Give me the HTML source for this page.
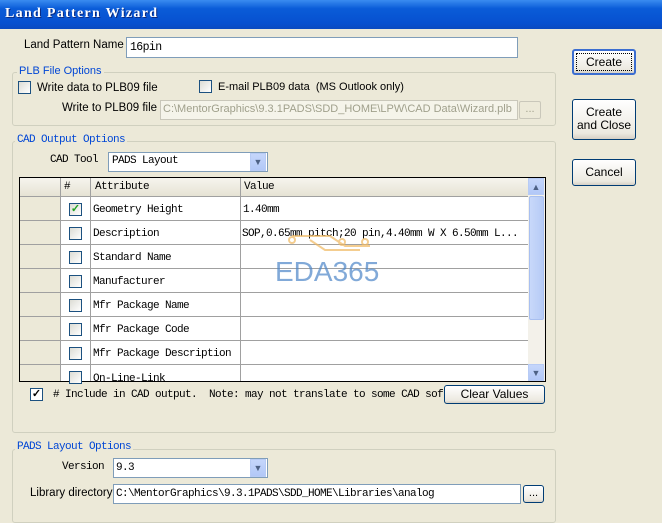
<!DOCTYPE html>
<html><head><meta charset="utf-8"><style>
*{margin:0;padding:0;box-sizing:border-box}
body{width:662px;height:510px;background:#ece9d8;position:relative;overflow:hidden;font-family:"Liberation Sans",sans-serif;font-size:11px;color:#000}
.a{position:absolute;white-space:nowrap}
.m{font-family:"Liberation Mono","Noto Sans CJK SC",monospace;font-size:11px;letter-spacing:-0.6px}
.title{left:0;top:0;width:662px;height:29px;background:linear-gradient(#3a8cf0,#0a5cd8 30%,#0750d0 80%,#0a4ac0);}
.tt{left:5px;top:6px;color:#fff;font-family:"Liberation Serif",serif;font-weight:bold;font-size:14px;letter-spacing:1.3px;text-shadow:1px 1px 0 #0a2a80}
.inp{position:absolute;background:#fff;border:1px solid #7f9db9}
.grp{position:absolute;border:1px solid #d0d0bf;border-radius:3px}
.gt{position:absolute;background:#ece9d8;color:#0046d5;padding:0 2px}
.cb{position:absolute;width:13px;height:13px;border:1px solid #1c5180;background:linear-gradient(135deg,#dcdcd4,#fff)}
.btn{position:absolute;border:1px solid #003c74;border-radius:3px;background:linear-gradient(#fff,#ece9e0 85%,#d6d0c5);text-align:center;font-size:12px}
.combo-b{position:absolute;width:16px;background:linear-gradient(#c5d6fb,#b2c8f7);border:1px solid #b7cbf5;color:#4d6185;font-size:9px;text-align:center;line-height:16px}
.row{position:absolute;left:20px;width:508px;height:24px;border-bottom:1px solid #a0a0a0}
</style></head><body>
<div class="a title"></div>
<div class="a tt">Land Pattern Wizard</div>

<div class="a" style="left:24px;top:39px;font-size:11.5px">Land Pattern Name</div>
<div class="inp" style="left:126px;top:37px;width:392px;height:21px"></div>
<div class="a m" style="left:130px;top:41px;font-size:11.5px">16pin</div>

<div class="grp" style="left:12px;top:72px;width:544px;height:54px"></div>
<div class="gt" style="left:17px;top:65px;font-size:11px">PLB File Options</div>
<div class="cb" style="left:18px;top:81px"></div>
<div class="a" style="left:37px;top:82px;font-size:11.5px">Write data to PLB09 file</div>
<div class="cb" style="left:199px;top:80px"></div>
<div class="a" style="left:218px;top:81px;font-size:11px">E-mail PLB09 data&nbsp; (MS Outlook only)</div>
<div class="a" style="left:62px;top:102px;font-size:11.5px">Write to PLB09 file</div>
<div class="inp" style="left:160px;top:100px;width:358px;height:20px;background:#f5f4ea;border-color:#c9c7ba"></div>
<div class="a" style="left:163px;top:103px;color:#a0a08c;font-size:11px">C:\MentorGraphics\9.3.1PADS\SDD_HOME\LPW\CAD Data\Wizard.plb</div>
<div class="a" style="left:519px;top:101px;width:22px;height:18px;border:1px solid #c9c7ba;border-radius:2px;color:#a0a08c;text-align:center;line-height:14px">...</div>

<div class="grp" style="left:12px;top:141px;width:544px;height:292px"></div>
<div class="gt m" style="left:15px;top:134px">CAD Output Options</div>
<div class="a m" style="left:50px;top:154px">CAD Tool</div>
<div class="inp" style="left:108px;top:152px;width:160px;height:20px"></div>
<div class="a m" style="left:112px;top:155px">PADS Layout</div>
<div class="combo-b" style="left:250px;top:153px;height:18px">&#9660;</div>

<div class="a" style="left:19px;top:177px;width:527px;height:205px;border:1px solid #000;background:#fff;overflow:hidden"></div>
<div class="a" style="left:20px;top:178px;width:40px;height:203px;background:#ece9d8"></div>
<div class="a" style="left:20px;top:178px;width:508px;height:19px;background:linear-gradient(#f6f5ee,#e6e3d4);border-bottom:1px solid #a0a0a0"></div>
<div class="a m" style="left:64px;top:181px">#</div>
<div class="a m" style="left:95px;top:181px">Attribute</div>
<div class="a m" style="left:244px;top:181px">Value</div>
<div class="a" style="left:60px;top:178px;width:1px;height:203px;background:#a0a0a0"></div>
<div class="a" style="left:90px;top:178px;width:1px;height:203px;background:#a0a0a0"></div>
<div class="a" style="left:240px;top:178px;width:1px;height:203px;background:#a0a0a0"></div>

<div class="row" style="top:197px"></div><div class="row" style="top:221px"></div><div class="row" style="top:245px"></div><div class="row" style="top:269px"></div><div class="row" style="top:293px"></div><div class="row" style="top:317px"></div><div class="row" style="top:341px"></div>
<div class="a" style="left:20px;top:197px;width:40px;height:184px;background:repeating-linear-gradient(#ece9d8 0,#ece9d8 23px,#a0a0a0 23px,#a0a0a0 24px)"></div>

<div class="cb" style="left:69px;top:203px;color:#21a121;font-size:11px;line-height:11px;text-align:center;font-weight:bold">&#10003;</div>
<div class="cb" style="left:69px;top:227px"></div><div class="cb" style="left:69px;top:251px"></div><div class="cb" style="left:69px;top:275px"></div><div class="cb" style="left:69px;top:299px"></div><div class="cb" style="left:69px;top:323px"></div><div class="cb" style="left:69px;top:347px"></div><div class="cb" style="left:69px;top:371px"></div>
<div class="a m" style="left:93px;top:204px">Geometry Height</div>
<div class="a m" style="left:93px;top:228px">Description</div>
<div class="a m" style="left:93px;top:252px">Standard Name</div>
<div class="a m" style="left:93px;top:276px">Manufacturer</div>
<div class="a m" style="left:93px;top:300px">Mfr Package Name</div>
<div class="a m" style="left:93px;top:324px">Mfr Package Code</div>
<div class="a m" style="left:93px;top:348px">Mfr Package Description</div>
<div class="a" style="left:93px;top:372px;height:9px;overflow:hidden"><span class="m">On-Line-Link</span></div>
<div class="a m" style="left:243px;top:204px">1.40mm</div>
<div class="a m" style="left:242px;top:228px">SOP,0.65mm pitch;20 pin,4.40mm W X 6.50mm L...</div>

<div class="a" style="left:528px;top:178px;width:17px;height:203px;background:#f3f1ea"></div>
<div class="combo-b" style="left:528px;top:178px;height:17px">&#9650;</div>
<div class="a" style="left:529px;top:196px;width:15px;height:124px;background:linear-gradient(90deg,#c8d8fa,#b6cbf6);border:1px solid #a8bff0;border-radius:2px"></div>
<div class="combo-b" style="left:528px;top:364px;height:17px">&#9660;</div>

<svg class="a" style="left:270px;top:228px" width="120" height="60"><g stroke="#f0b860" stroke-width="2" fill="none" opacity=".7"><path d="M22 8 H60 L75 18 H100"/><path d="M40 12 L55 22 H90"/><circle cx="22" cy="12" r="3"/><circle cx="72" cy="14" r="3"/><circle cx="95" cy="14" r="3"/></g><text x="5" y="53" font-family="Liberation Sans,sans-serif" font-size="28" fill="#4c86c8" opacity=".7">EDA365</text></svg>

<div class="cb" style="left:30px;top:388px;background:#fff;font-size:11px;line-height:11px;text-align:center;font-weight:bold">&#10003;</div>
<div class="a m" style="left:53px;top:389px">#&nbsp;Include&nbsp;in&nbsp;CAD&nbsp;output.&nbsp;&nbsp;Note:&nbsp;may&nbsp;not&nbsp;translate&nbsp;to&nbsp;some&nbsp;CAD&nbsp;sof</div>
<div class="btn" style="left:444px;top:385px;width:101px;height:19px;line-height:17px">Clear Values</div>

<div class="grp" style="left:12px;top:449px;width:544px;height:74px"></div>
<div class="gt m" style="left:15px;top:441px">PADS Layout Options</div>
<div class="a m" style="left:62px;top:461px">Version</div>
<div class="inp" style="left:113px;top:458px;width:155px;height:20px"></div>
<div class="a m" style="left:116px;top:462px">9.3</div>
<div class="combo-b" style="left:250px;top:459px;height:18px">&#9660;</div>
<div class="a" style="left:30px;top:487px;font-size:11.5px">Library directory</div>
<div class="inp" style="left:113px;top:484px;width:408px;height:20px"></div>
<div class="a m" style="left:116px;top:488px">C:\MentorGraphics\9.3.1PADS\SDD_HOME\Libraries\analog</div>
<div class="btn" style="left:523px;top:485px;width:21px;height:18px;line-height:14px;font-size:11px">...</div>

<div class="btn" style="left:572px;top:49px;width:64px;height:26px;line-height:22px;border:2px solid #3c6ed0;outline:1px dotted #000;outline-offset:-5px">Create</div>
<div class="btn" style="left:572px;top:99px;width:64px;height:41px;line-height:13px;padding-top:6px">Create<br>and Close</div>
<div class="btn" style="left:572px;top:159px;width:64px;height:27px;line-height:25px">Cancel</div>
</body></html>
